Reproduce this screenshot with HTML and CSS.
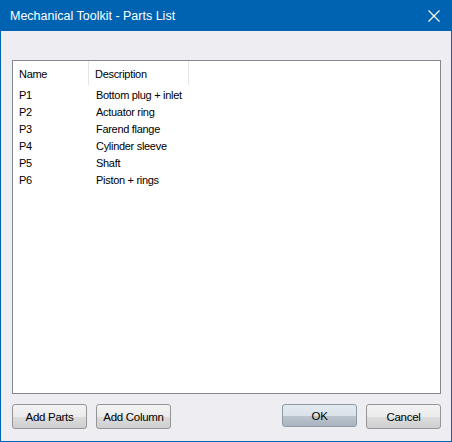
FILE: index.html
```html
<!DOCTYPE html>
<html>
<head>
<meta charset="utf-8">
<link rel="stylesheet" href="styles.css">
</head>
<body>
<div class="window">
  <div class="titlebar">
    <span class="title">Mechanical Toolkit - Parts List</span>
    <svg class="close" width="12" height="12" viewBox="0 0 12 12"><path d="M0.5 0.5 L11.5 11.5 M11.5 0.5 L0.5 11.5" stroke="#fff" stroke-width="1.2" fill="none"/></svg>
  </div>
  <div class="content">
    <div class="listbox">
      <div class="header">
        <div class="hcell c1">Name</div>
        <div class="hcell c2">Description</div>
      </div>
      <div class="rows">
        <div class="row"><span class="c1">P1</span><span class="c2">Bottom plug + inlet</span></div>
        <div class="row"><span class="c1">P2</span><span class="c2">Actuator ring</span></div>
        <div class="row"><span class="c1">P3</span><span class="c2">Farend flange</span></div>
        <div class="row"><span class="c1">P4</span><span class="c2">Cylinder sleeve</span></div>
        <div class="row"><span class="c1">P5</span><span class="c2">Shaft</span></div>
        <div class="row"><span class="c1">P6</span><span class="c2">Piston + rings</span></div>
      </div>
    </div>
    <div class="buttons">
      <div class="left">
        <button class="btn">Add Parts</button>
        <button class="btn">Add Column</button>
      </div>
      <div class="right">
        <button class="btn default">OK</button>
        <button class="btn">Cancel</button>
      </div>
    </div>
  </div>
</div>
</body>
</html>
```
FILE: styles.css
```css
html, body { margin: 0; padding: 0; }
body {
  width: 452px; height: 442px; overflow: hidden;
  font-family: "Liberation Sans", Arial, sans-serif;
  font-size: 11px; color: #000;
}
.window {
  box-sizing: border-box;
  width: 452px; height: 442px;
  border: 1px solid #0063b1;
  background: #eeeef2;
  display: flex; flex-direction: column;
}
.titlebar {
  height: 30px;
  background: #0063b1;
  color: #fff;
  display: flex; align-items: center; justify-content: space-between;
  padding: 0 10px 0 9px;
}
.title { font-size: 12.5px; }
.close { margin-right: 1px; }
.content {
  flex: 1;
  padding: 29px 10px 12px 11px;
  display: flex; flex-direction: column;
}
.listbox {
  box-sizing: border-box;
  height: 334px;
  border: 1px solid #828790;
  background: #fff;
  letter-spacing: -0.3px;
}
.header { display: flex; height: 24px; }
.hcell {
  box-sizing: border-box;
  height: 24px; line-height: 22px;
  padding: 2px 0 0 6px;
  border-right: 1px solid #e5e5e5;
}
.hcell.c1 { width: 76px; }
.hcell.c2 { width: 100px; }
.rows { padding-top: 2px; }
.row { display: flex; height: 17px; line-height: 17px; }
.row .c1 { width: 76px; padding-left: 6px; box-sizing: border-box; }
.row .c2 { padding-left: 7px; }
.buttons {
  margin-top: 10px;
  display: flex; justify-content: space-between; align-items: flex-end;
}
.left, .right { display: flex; gap: 9px; }
.btn {
  box-sizing: border-box;
  width: 75px; height: 25px;
  font-family: "Liberation Sans", Arial, sans-serif;
  font-size: 11.5px; letter-spacing: -0.3px; color: #000;
  border: 1px solid #959595;
  border-radius: 3px;
  background: linear-gradient(#f3f3f3 0%, #ebebeb 50%, #dddddd 51%, #cfcfcf 100%);
  padding: 0;
}
.btn.default {
  height: 23px;
  border-color: #8e9aa6;
  background: linear-gradient(#e3e9ef 0%, #dbe2ea 50%, #bcc5ce 51%, #aab4be 100%);
}
```
